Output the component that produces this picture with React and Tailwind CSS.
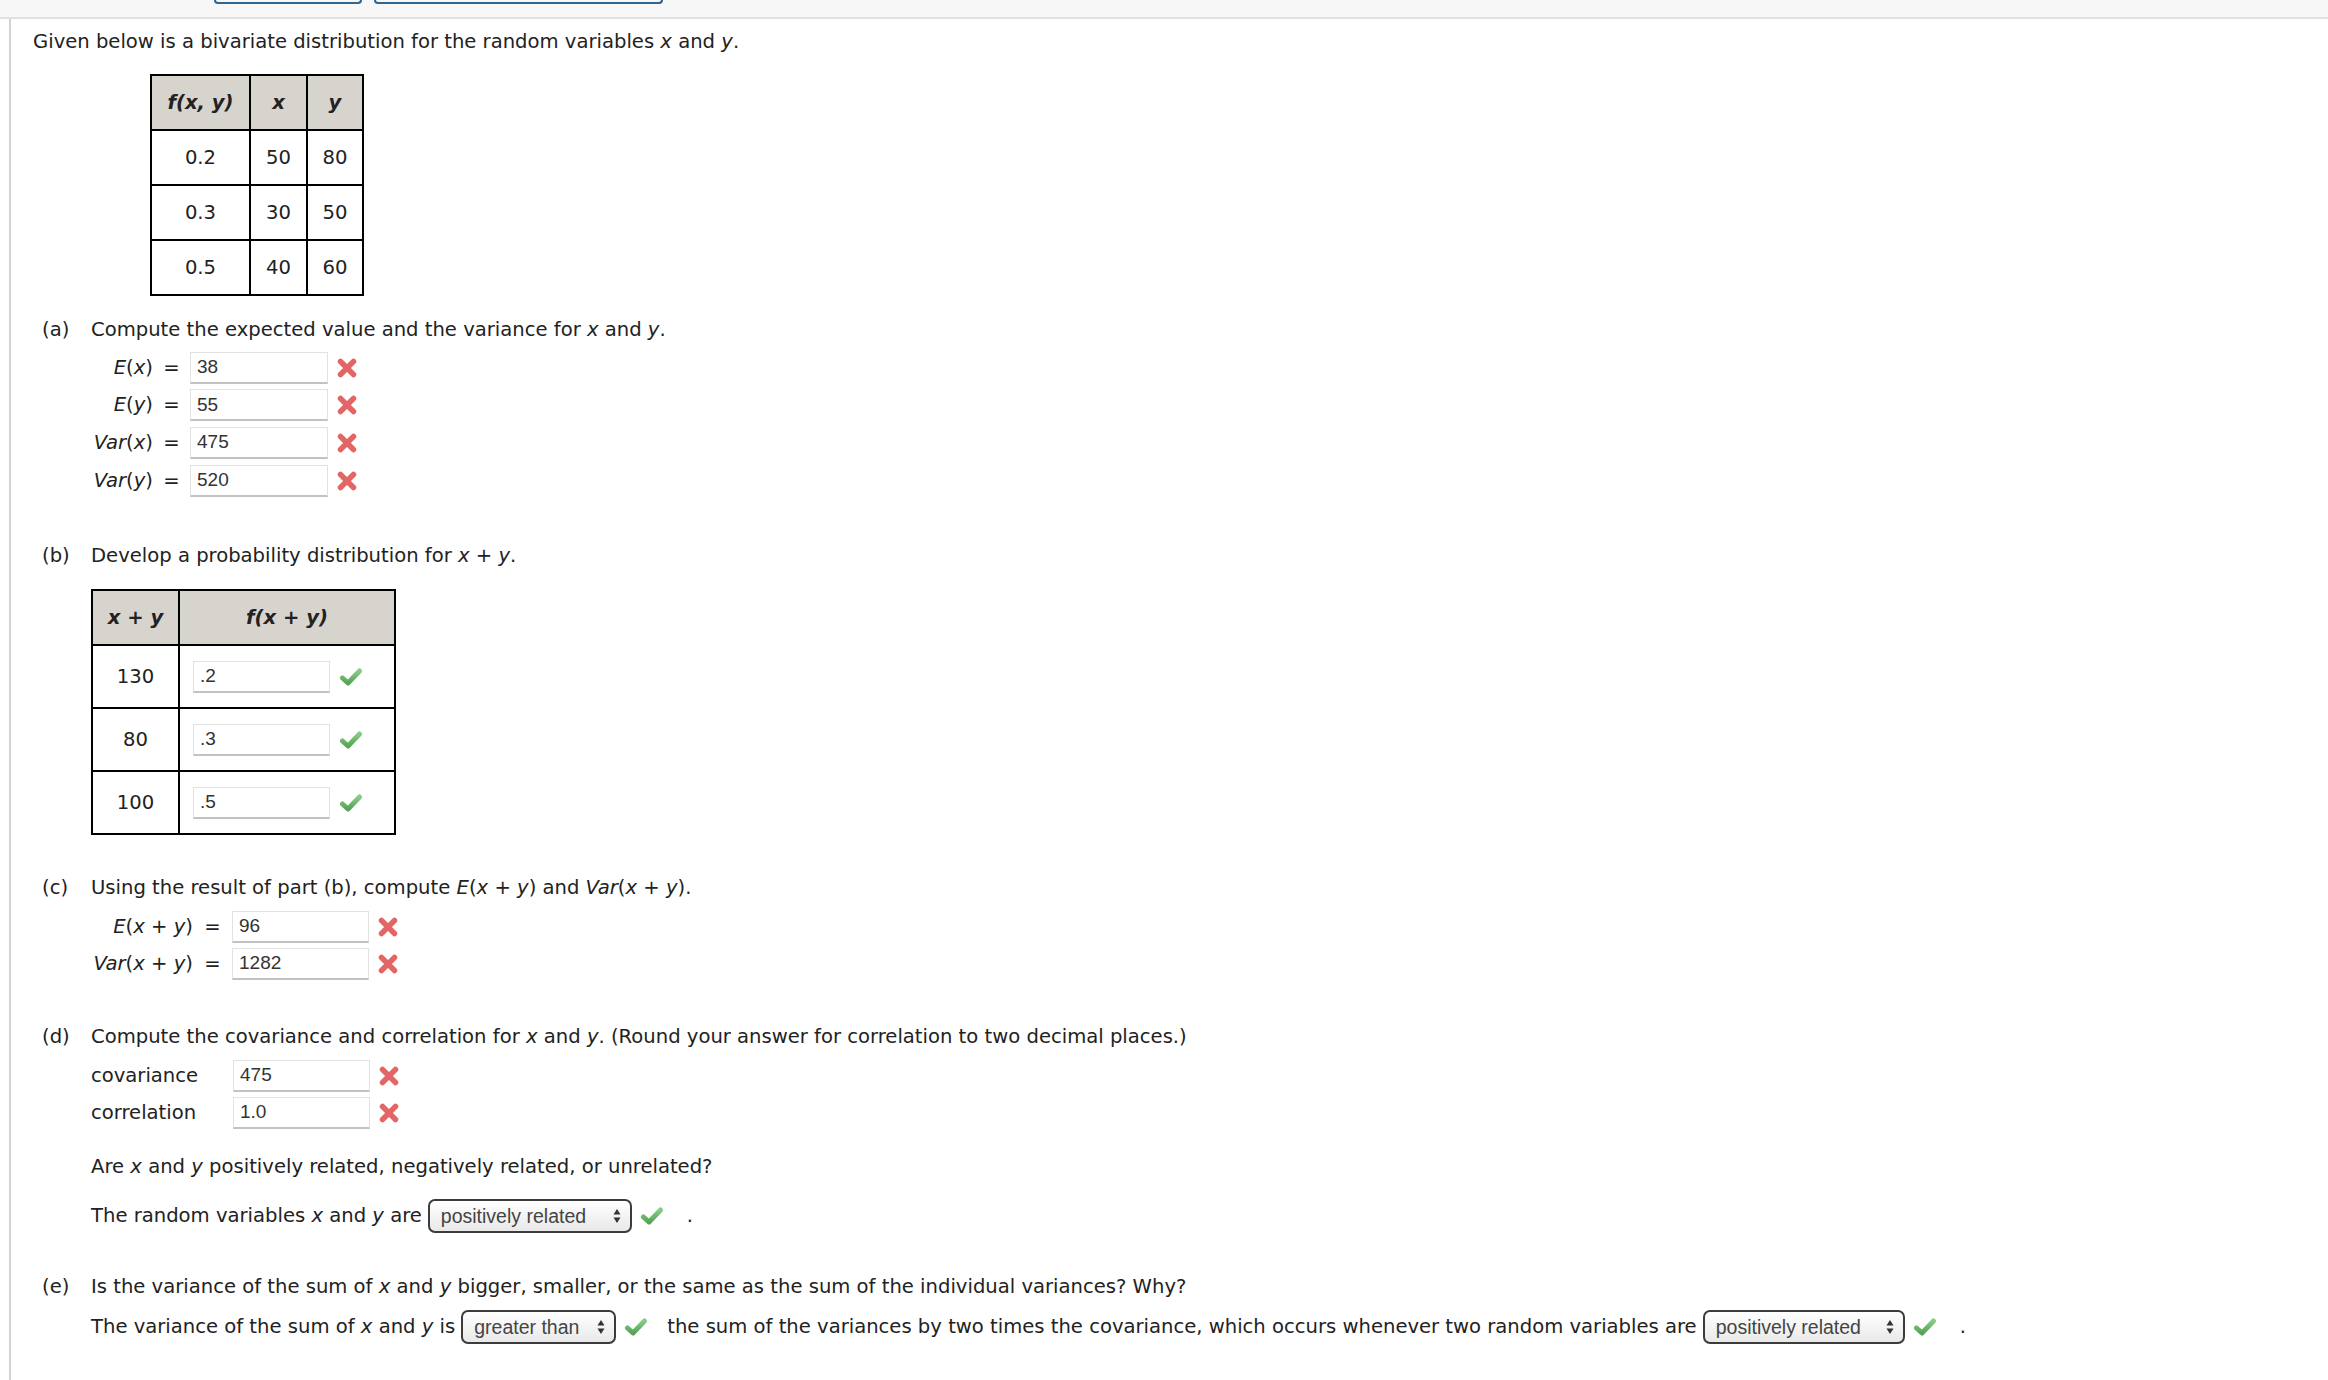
import React from 'react'

function Cross() {
  return (
    <svg width="24" height="24" viewBox="0 0 24 24" className="shrink-0">
      <path d="M5.5 5.5 L18.5 18.5 M18.5 5.5 L5.5 18.5" stroke="#e36565" strokeWidth="5.5" strokeLinecap="round" />
    </svg>
  )
}

function Check() {
  return (
    <svg width="24" height="20" viewBox="0 0 24 20" className="shrink-0">
      <defs>
        <linearGradient id="g" x1="0" y1="0" x2="0" y2="1">
          <stop offset="0" stopColor="#86cc86" />
          <stop offset="1" stopColor="#55a555" />
        </linearGradient>
      </defs>
      <path d="M3.5 11 L9 16 L20.5 4" fill="none" stroke="url(#g)" strokeWidth="5" strokeLinecap="round" strokeLinejoin="round" />
    </svg>
  )
}

function Answer({ value, w = 'w-[138px]' }) {
  return (
    <div className={`${w} h-[32px] bg-white border border-[#e2e2e2] border-b-2 border-b-[#c2c2c2] flex items-center pl-[6px] font-['Liberation_Sans',Arial,sans-serif] text-[19px] text-[#333]`}>
      {value}
    </div>
  )
}

function Select({ value, w }) {
  return (
    <div className={`${w} h-[34px] inline-flex items-center justify-between border-2 border-[#3c3c3c] rounded-[7px] bg-gradient-to-b from-white to-[#e9e9e9] pl-[11px] pr-[9px] font-['Liberation_Sans',Arial,sans-serif] text-[19.5px] text-[#444]`}>
      <span>{value}</span>
      <svg width="8" height="16" viewBox="0 0 8 16">
        <path d="M4 1 L7.5 6.5 L0.5 6.5 Z M4 15 L7.5 9.5 L0.5 9.5 Z" fill="#333" />
      </svg>
    </div>
  )
}

const I = ({ children }) => <i>{children}</i>

export default function App() {
  const cell = 'border-2 border-black text-center'
  return (
    <div className="min-h-screen w-full bg-white font-['DejaVu_Sans',Verdana,sans-serif] text-[19.6px] leading-[26px] text-[#222]">
      {/* top bar */}
      <div className="h-[19px] bg-[#f7f7f7] border-b-2 border-[#e0e0e0] flex items-start pl-[214px] gap-[12px]">
        <div className="w-[148px] h-[4px] border-2 border-t-0 border-[#2f6494] rounded-b-[4px]"></div>
        <div className="w-[289px] h-[4px] border-2 border-t-0 border-[#2f6494] rounded-b-[4px]"></div>
      </div>

      <div className="ml-[9px] border-l-2 border-[#d2d2d2] pl-[22px] pt-[10px] pb-[60px] min-h-[1361px]">
        <p>Given below is a bivariate distribution for the random variables <I>x</I> and <I>y</I>.</p>

        <table className="mt-[19px] ml-[117px] border-collapse border-2 border-black">
          <thead>
            <tr className="h-[55px] bg-[#d7d4ce] font-bold italic">
              <th className={`${cell} w-[99px]`}>f(x, y)</th>
              <th className={`${cell} w-[57px]`}>x</th>
              <th className={`${cell} w-[56px]`}>y</th>
            </tr>
          </thead>
          <tbody>
            {[['0.2', 50, 80], ['0.3', 30, 50], ['0.5', 40, 60]].map((r) => (
              <tr key={r[0]} className="h-[55px]">
                <td className={cell}>{r[0]}</td>
                <td className={cell}>{r[1]}</td>
                <td className={cell}>{r[2]}</td>
              </tr>
            ))}
          </tbody>
        </table>

        {/* (a) */}
        <div className="ml-[9px] mt-[21px]">
          <div className="flex">
            <span className="w-[49px]">(a)</span>
            <span>Compute the expected value and the variance for <I>x</I> and <I>y</I>.</span>
          </div>
          <div className="mt-[6px] pl-[49px]">
            {[
              [<><I>E</I>(<I>x</I>)</>, '38'],
              [<><I>E</I>(<I>y</I>)</>, '55'],
              [<><I>Var</I>(<I>x</I>)</>, '475'],
              [<><I>Var</I>(<I>y</I>)</>, '520'],
            ].map(([label, v], i) => (
              <div key={i} className="h-[37.6px] flex items-center">
                <span className="w-[62px] text-right whitespace-nowrap">{label}</span>
                <span className="w-[37px] text-center">=</span>
                <Answer value={v} />
                <span className="ml-[7px]"><Cross /></span>
              </div>
            ))}
          </div>
        </div>

        {/* (b) */}
        <div className="ml-[9px] mt-[44px]">
          <div className="flex">
            <span className="w-[49px]">(b)</span>
            <span>Develop a probability distribution for <I>x</I> + <I>y</I>.</span>
          </div>
          <table className="mt-[20px] ml-[49px] border-collapse border-2 border-black">
            <thead>
              <tr className="h-[55px] bg-[#d7d4ce] font-bold italic">
                <th className={`${cell} w-[87px]`}>x + y</th>
                <th className={`${cell} w-[216px]`}>f(x + y)</th>
              </tr>
            </thead>
            <tbody>
              {[['130', '.2'], ['80', '.3'], ['100', '.5']].map((r) => (
                <tr key={r[0]} className="h-[63px]">
                  <td className={cell}>{r[0]}</td>
                  <td className="border-2 border-black">
                    <div className="flex items-center pl-[13px]">
                      <Answer value={r[1]} w="w-[137px]" />
                      <span className="ml-[9px]"><Check /></span>
                    </div>
                  </td>
                </tr>
              ))}
            </tbody>
          </table>
        </div>

        {/* (c) */}
        <div className="ml-[9px] mt-[40px]">
          <div className="flex">
            <span className="w-[49px]">(c)</span>
            <span>Using the result of part (b), compute <I>E</I>(<I>x</I> + <I>y</I>) and <I>Var</I>(<I>x</I> + <I>y</I>).</span>
          </div>
          <div className="mt-[7px] pl-[49px]">
            {[
              [<><I>E</I>(<I>x</I> + <I>y</I>)</>, '96'],
              [<><I>Var</I>(<I>x</I> + <I>y</I>)</>, '1282'],
            ].map(([label, v], i) => (
              <div key={i} className="h-[37px] flex items-center">
                <span className="w-[102px] text-right whitespace-nowrap">{label}</span>
                <span className="w-[39px] text-center">=</span>
                <Answer value={v} w="w-[137px]" />
                <span className="ml-[7px]"><Cross /></span>
              </div>
            ))}
          </div>
        </div>

        {/* (d) */}
        <div className="ml-[9px] mt-[42px]">
          <div className="flex">
            <span className="w-[49px]">(d)</span>
            <span>Compute the covariance and correlation for <I>x</I> and <I>y</I>. (Round your answer for correlation to two decimal places.)</span>
          </div>
          <div className="pl-[49px]">
            <div className="mt-[7px]">
              {[['covariance', '475'], ['correlation', '1.0']].map(([label, v]) => (
                <div key={label} className="h-[37px] flex items-center">
                  <span className="w-[142px] whitespace-nowrap">{label}</span>
                  <Answer value={v} w="w-[137px]" />
                  <span className="ml-[7px]"><Cross /></span>
                </div>
              ))}
            </div>
            <p className="mt-[23px]">Are <I>x</I> and <I>y</I> positively related, negatively related, or unrelated?</p>
            <div className="mt-[19px] h-[34px] flex items-center">
              <span>The random variables <I>x</I> and <I>y</I> are</span>
              <span className="ml-[6px]"><Select value="positively related" w="w-[204px]" /></span>
              <span className="ml-[8px]"><Check /></span>
              <span className="ml-[23px]">.</span>
            </div>
          </div>
        </div>

        {/* (e) */}
        <div className="ml-[9px] mt-[41px]">
          <div className="flex">
            <span className="w-[49px]">(e)</span>
            <span>Is the variance of the sum of <I>x</I> and <I>y</I> bigger, smaller, or the same as the sum of the individual variances? Why?</span>
          </div>
          <div className="mt-[10px] pl-[49px] h-[34px] flex items-center whitespace-nowrap">
            <span>The variance of the sum of <I>x</I> and <I>y</I> is</span>
            <span className="ml-[6px]"><Select value="greater than" w="w-[155px]" /></span>
            <span className="ml-[8px]"><Check /></span>
            <span className="ml-[19px]">the sum of the variances by two times the covariance, which occurs whenever two random variables are</span>
            <span className="ml-[6px]"><Select value="positively related" w="w-[202px]" /></span>
            <span className="ml-[8px]"><Check /></span>
            <span className="ml-[23px]">.</span>
          </div>
        </div>
      </div>
    </div>
  )
}
